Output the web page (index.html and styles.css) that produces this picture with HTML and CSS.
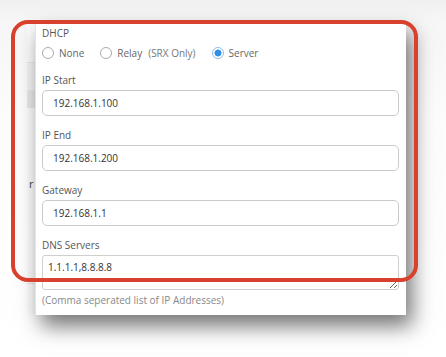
FILE: index.html
```html
<!DOCTYPE html>
<html>
<head>
<meta charset="utf-8">
<link rel="stylesheet" href="styles.css">
</head>
<body>
<div class="stage">
  <div class="behind">
    <div class="b-top"></div>
    <div class="b-line"></div>
    <div class="b-block"></div>
    <div class="b-gap"></div>
    <div class="b-text">r</div>
    <div class="b-rest"></div>
    <div class="b-line2"></div>
  </div>
  <div class="panel">
    <div class="label">DHCP</div>
    <div class="radios">
      <span class="radio"></span><span class="opt">None</span>
      <span class="radio gap"></span><span class="opt">Relay</span><span class="note">(SRX Only)</span>
      <span class="radio checked gap"></span><span class="opt">Server</span>
    </div>
    <div class="field first">
      <div class="label">IP Start</div>
      <input class="input" type="text" value="192.168.1.100" readonly>
    </div>
    <div class="field">
      <div class="label">IP End</div>
      <input class="input" type="text" value="192.168.1.200" readonly>
    </div>
    <div class="field">
      <div class="label">Gateway</div>
      <input class="input" type="text" value="192.168.1.1" readonly>
    </div>
    <div class="field last">
      <div class="label">DNS Servers</div>
      <textarea class="area" readonly>1.1.1.1,8.8.8.8</textarea>
    </div>
    <div class="hint">(Comma seperated list of IP Addresses)</div>
  </div>
</div>
<div class="highlight"></div>
</body>
</html>
```
FILE: styles.css
```css
html, body {
  margin: 0;
  padding: 0;
}
body {
  width: 446px;
  height: 357px;
  overflow: hidden;
  position: relative;
  background: linear-gradient(#f0f0f0 0px, #f6f6f6 20px, #fcfcfc 120px, #ffffff 100%);
  font-family: "Open Sans", "Liberation Sans", sans-serif;
  font-size: 10px;
  color: #555;
}
.stage {
  display: flex;
  align-items: flex-start;
  padding-top: 22px;
}
.behind {
  margin-left: 27px;
  width: 8px;
  height: 293px;
  display: flex;
  flex-direction: column;
  background: #fbfbfb;
}
.b-top { height: 40px; }
.b-line { height: 28px; background: #f3f3f3; border-top: 1px solid #e6e6e6; box-sizing: border-box; }
.b-block { height: 18px; background: #e8e8e8; }
.b-gap { height: 66px; }
.b-text {
  height: 20px;
  padding-left: 2px;
  font-size: 11px;
  line-height: 20px;
  color: #444;
}
.b-rest { height: 89px; }
.b-line2 { height: 1px; background: #e6e6e6; }
.panel {
  width: 371px;
  height: 293px;
  box-sizing: border-box;
  background: #fff;
  border-left: 1px solid #e4e4e4;
  padding: 1px 7px 0 6px;
  box-shadow: 6px 11px 20px rgba(0, 0, 0, 0.55);
}
.label {
  line-height: 20px;
  height: 20px;
  color: #555;
}
.radios {
  display: flex;
  align-items: center;
  height: 20px;
  color: #666;
}
.radio {
  width: 12px;
  height: 12px;
  box-sizing: border-box;
  border: 1px solid #aaa;
  border-radius: 50%;
  background: #fff;
  margin-right: 5px;
  flex-shrink: 0;
}
.radio.gap { margin-left: 16px; }
.radio.checked {
  border-color: #8dbdea;
  background: radial-gradient(circle, #2f8fe4 0, #2f8fe4 3.2px, #ffffff 3.8px);
}
.opt { line-height: 20px; }
.note { margin-left: 6px; color: #777; }
.field { margin-top: 9px; }
.field.first { margin-top: 7px; }
.input {
  display: block;
  width: 357px;
  height: 26px;
  box-sizing: border-box;
  margin: 0;
  border: 1px solid #cacaca;
  border-radius: 5px;
  padding: 0 10px;
  font-family: "Open Sans", "Liberation Sans", sans-serif;
  font-size: 10px;
  color: #333;
  background: #fff;
  outline: none;
}
.area {
  display: block;
  width: 357px;
  height: 35px;
  box-sizing: border-box;
  margin: 0;
  border: 1px solid #cfcfcf;
  border-radius: 3px;
  padding: 4px 5px;
  font-family: "Open Sans", "Liberation Sans", sans-serif;
  font-size: 10px;
  line-height: 14px;
  color: #333;
  background: #fff;
  outline: none;
  resize: vertical;
}
.hint {
  margin-top: 1px;
  line-height: 18px;
  color: #888;
}
.highlight {
  position: absolute;
  left: 11px;
  top: 20px;
  width: 407px;
  height: 262px;
  box-sizing: border-box;
  border: 4px solid #d9412f;
  border-radius: 17px;
  pointer-events: none;
}
```
